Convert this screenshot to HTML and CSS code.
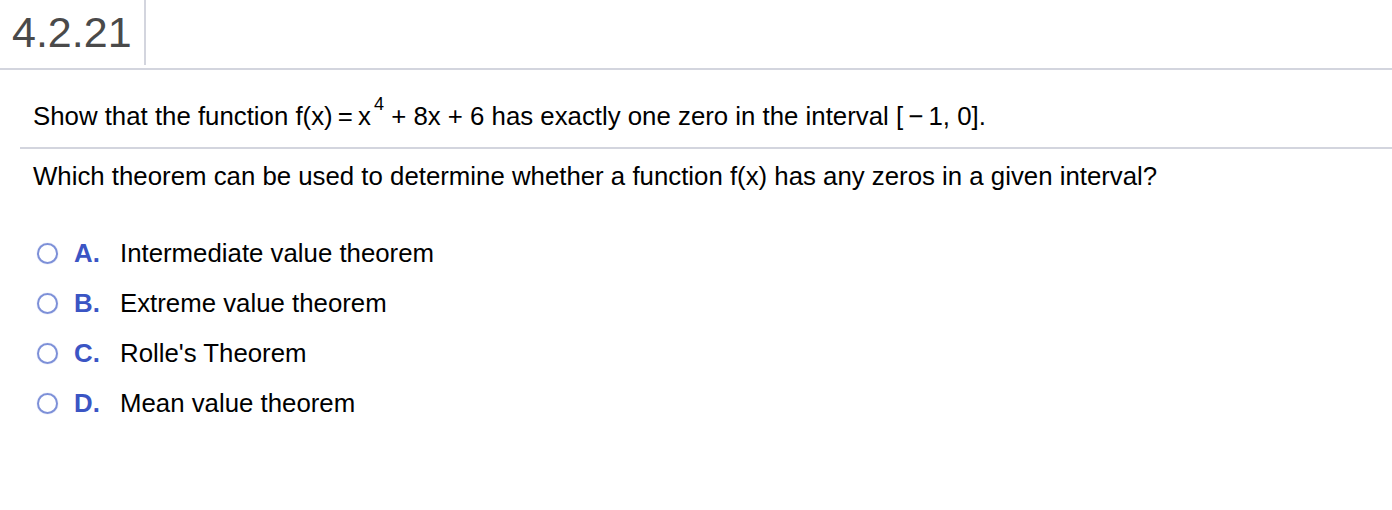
FILE: index.html
```html
<!DOCTYPE html>
<html lang="en">
<head>
    <meta charset="UTF-8">
    <title>4.2.21</title>
    <link rel="stylesheet" href="styles.css">
</head>
<body>
    <div class="header">
        <div class="problem-number">4.2.21</div>
    </div>

    <div class="question">
        <p class="statement">Show that the function f(x)&#8201;=&#8201;x<sup>4</sup> + 8x + 6 has exactly one zero in the interval [&#8201;&minus;&#8201;1, 0].</p>
    </div>

    <div class="part">
        <p class="prompt">Which theorem can be used to determine whether a function f(x) has any zeros in a given interval?</p>

        <ul class="choices">
            <li class="choice">
                <span class="radio"></span>
                <span class="letter">A.</span>
                <span class="answer">Intermediate value theorem</span>
            </li>
            <li class="choice">
                <span class="radio"></span>
                <span class="letter">B.</span>
                <span class="answer">Extreme value theorem</span>
            </li>
            <li class="choice">
                <span class="radio"></span>
                <span class="letter">C.</span>
                <span class="answer">Rolle's Theorem</span>
            </li>
            <li class="choice">
                <span class="radio"></span>
                <span class="letter">D.</span>
                <span class="answer">Mean value theorem</span>
            </li>
        </ul>
    </div>
</body>
</html>
```

FILE: styles.css
```css
* {
    box-sizing: border-box;
    margin: 0;
    padding: 0;
}

body {
    background-color: white;
    color: black;
    font-family: "Liberation Sans", Arial, sans-serif;
}

.header {
    display: flex;
    height: 70px;
    border-bottom: 2px solid #d3d5de;
}

.problem-number {
    width: 146px;
    height: 65px;
    padding: 8px 0 0 12px;
    border-right: 2px solid #d3d5de;
    font-size: 43px;
    color: #4a4a4a;
}

.question {
    margin-left: 20px;
    padding: 30px 0 15px 13px;
    border-bottom: 2px solid #d3d5de;
}

.statement,
.prompt {
    font-size: 25.8px;
    line-height: 32px;
}

.statement sup {
    margin-left: 3px;
    font-size: 18px;
    line-height: 0;
    vertical-align: 15px;
}

.part {
    padding: 11px 0 0 33px;
}

.choices {
    list-style: none;
    margin-top: 36px;
}

.choice {
    display: flex;
    align-items: center;
    height: 50px;
    font-size: 25.8px;
}

.radio {
    width: 21px;
    height: 21px;
    margin: 0 0 0 4px;
    border: 2px solid #7d90d8;
    border-radius: 50%;
    box-shadow: 0 0 1px #9aaae3;
}

.letter {
    width: 46px;
    margin-left: 16px;
    font-weight: bold;
    color: #3b55c4;
}
```
